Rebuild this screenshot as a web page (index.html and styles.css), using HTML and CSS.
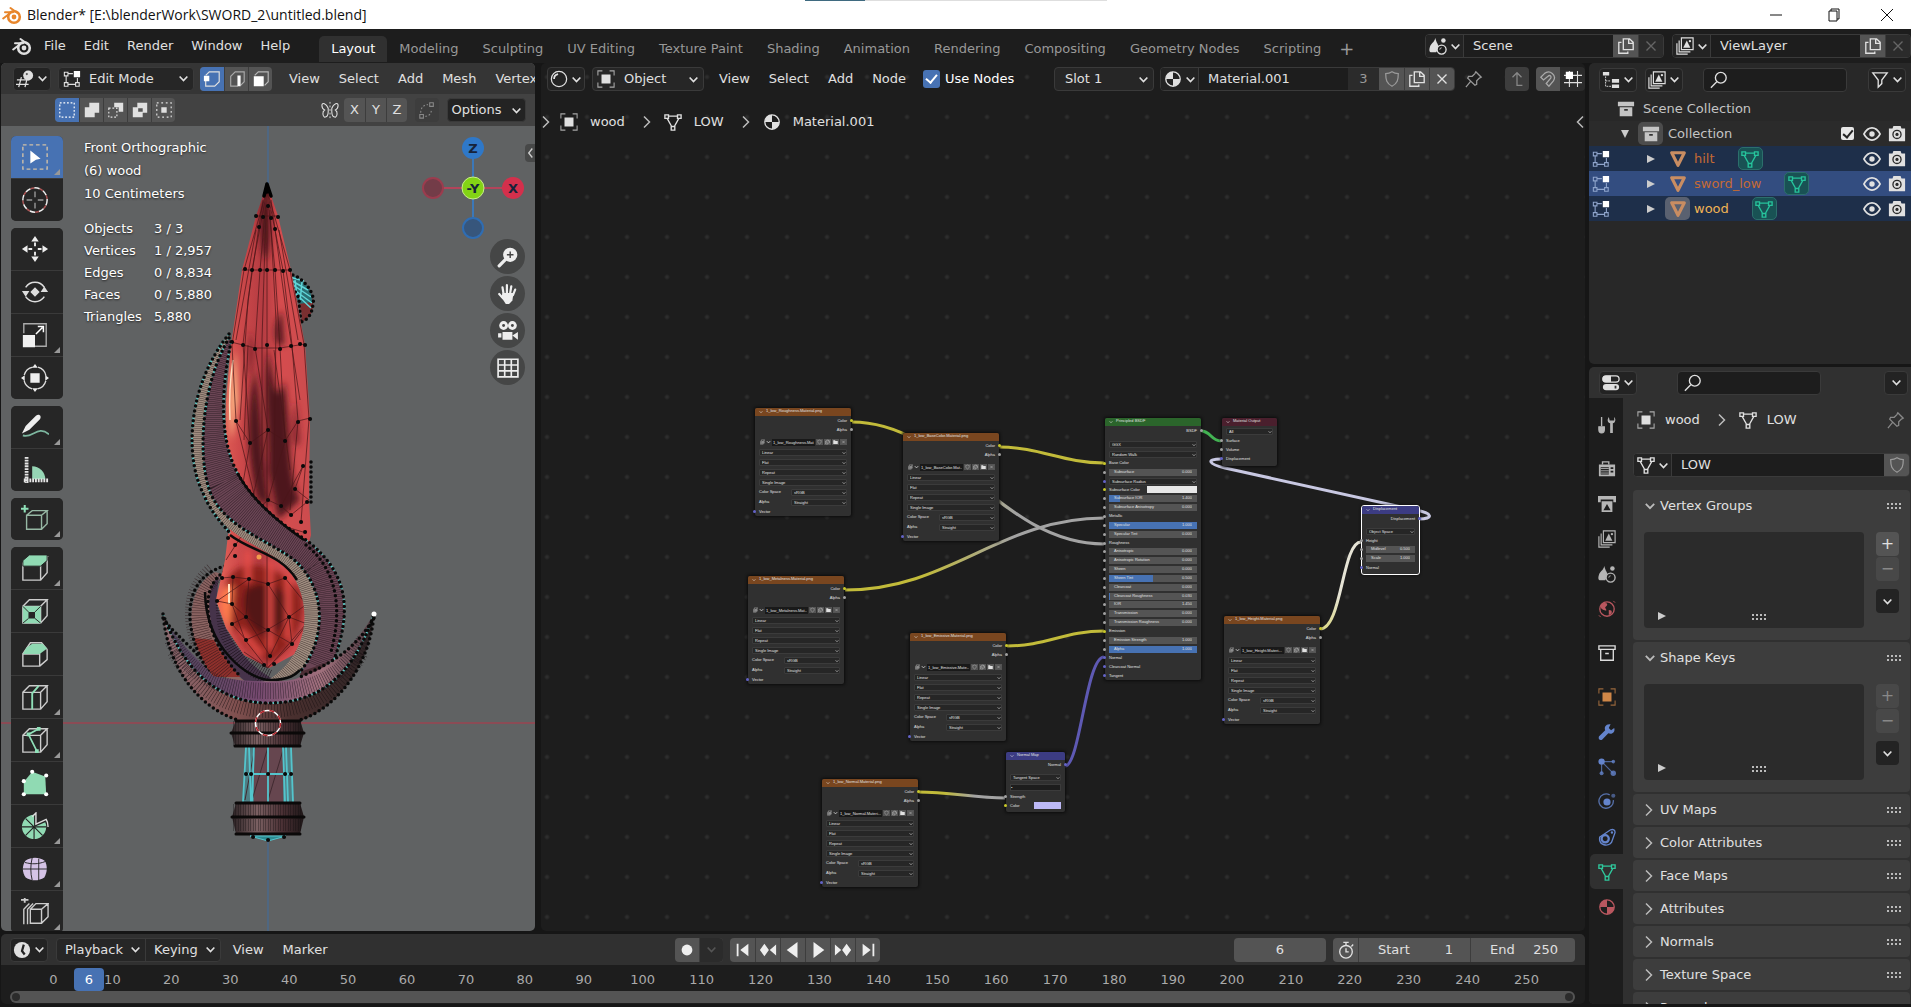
FILE: index.html
```html
<!DOCTYPE html>
<html lang="en">
<head>
    <meta charset="UTF-8">
    <meta name="viewport" content="width=device-width, initial-scale=1.0">
    <title>Blender* [E:\blenderWork\SWORD_2\untitled.blend]</title>

    <link rel="stylesheet" href="styles.css">
</head>
<body>
    <!-- icon sheet, 20x20 each -->
    <svg class="sheet" aria-hidden="true">
        <symbol id="i-chev" viewBox="0 0 10 10"><path d="M1.5 3.2 5 6.8 8.5 3.2" fill="none" stroke="currentColor" stroke-width="1.5"/></symbol>
        <symbol id="i-right" viewBox="0 0 10 20"><path d="M2 4.5 7.500 10 2 15.500" fill="none" stroke="currentColor" stroke-width="1.500"/></symbol>
        <symbol id="i-blender" viewBox="0 0 20 20"><g fill="none" stroke="currentColor" stroke-width="2" stroke-linecap="round" stroke-linejoin="round"><circle cx="12" cy="12" r="5.800" stroke-width="2.600"/><path d="M8.500 3 15.500 8M3 7.300h8M1.200 13.500 9 7.500"/></g><circle cx="12" cy="12" r="2.400" fill="currentColor"/></symbol>
        <symbol id="i-view3d" viewBox="0 0 20 20"><path d="M1 11h14M0 16h14M6 8 3 19M12 11l-2 8" stroke="currentColor" stroke-width="1.400" fill="none"/><circle cx="13.500" cy="6" r="5.500" fill="currentColor"/><circle cx="12" cy="4.500" r="1.200" fill="#555"/></symbol>
        <symbol id="i-edit" viewBox="0 0 20 20"><g fill="none" stroke="currentColor" stroke-width="1.200"><path d="M1.500 2.500h4v4h-4zM1.500 14h4v4h-4zM14 14h4v4h-4zM3.500 7v7M6 16h8M16 9v5M6 4h5"/></g><path d="M12 1h7v7h-7z" fill="#fff"/></symbol>
        <symbol id="i-vert" viewBox="0 0 20 20"><path d="M3 12v6h10l5-5V2H7L3 6" fill="none" stroke="currentColor" stroke-width="1.300"/><path d="M1 6.500h6v6H1z" fill="#fff"/></symbol>
        <symbol id="i-edge" viewBox="0 0 20 20"><path d="M11 18H3V7l5-5h10v11l-4 4" fill="none" stroke="currentColor" stroke-width="1.300" opacity=".6"/><path d="M10.500 6h3.500v12h-3.500z" fill="#fff"/></symbol>
        <symbol id="i-face" viewBox="0 0 20 20"><path d="M3 6l4-4h11v11l-4 4" fill="none" stroke="currentColor" stroke-width="1.300" opacity=".7"/><path d="M2 7h11v11H2z" fill="#fff"/></symbol>
        <symbol id="i-sel" viewBox="0 0 20 20"><path d="M2 2h16v16H2z" fill="none" stroke="#fff" stroke-width="1.300" stroke-dasharray="2 2"/></symbol>
        <symbol id="i-sel2" viewBox="0 0 20 20"><path d="M7 2h11v11h-5v5H2V7h5z" fill="currentColor"/></symbol>
        <symbol id="i-sel3" viewBox="0 0 20 20"><path d="M8 2h10v10h-5V7H8z" fill="currentColor"/><path d="M2 8h9v10H2z" fill="none" stroke="currentColor" stroke-width="1.300" stroke-dasharray="2 2"/></symbol>
        <symbol id="i-sel4" viewBox="0 0 20 20"><path fill-rule="evenodd" d="M7 2h11v11h-5v5H2V7h5zM8 8v4h5V8z" fill="currentColor"/></symbol>
        <symbol id="i-sel5" viewBox="0 0 20 20"><path d="M2 2h16v16H2z" fill="none" stroke="currentColor" stroke-width="1.300" stroke-dasharray="2 3"/><path d="M7 7h6v6H7z" fill="currentColor"/></symbol>
        <symbol id="i-fly" viewBox="0 0 20 20"><path d="M8 8C6 3 1 1 1 5c0 3 1 4 3 5-3 2-2 7 0 8 3 0 4-3 4-6zM12 8c2-5 7-7 7-3 0 3-1 4-3 5 3 2 2 7 0 8-3 0-4-3-4-6z" fill="none" stroke="currentColor" stroke-width="1.200"/><path d="M10 1v18" stroke="currentColor" stroke-dasharray="2 2"/></symbol>
        <symbol id="i-auto" viewBox="0 0 20 20"><g fill="none" stroke="currentColor" stroke-width="1.200"><path d="M13 2h4v4h-4zM2 15h4v4H2z"/><path d="M3 13C3 7 7 4 11 4M8 17c5 0 7-4 7-8" stroke-dasharray="2 2"/></g></symbol>
        <symbol id="i-obj" viewBox="0 0 20 20"><path d="M1 6V1h5M14 1h5v5M19 14v5h-5M6 19H1v-5" fill="none" stroke="currentColor" stroke-width="1.200" opacity=".7"/><path d="M5 5h10v10H5z" fill="currentColor"/></symbol>
        <symbol id="i-mesh" viewBox="0 0 20 20"><path d="M1 2h4v4H1zM15 2h4v4h-4zM8 15h4v4H8zM5 3.500h10M3.500 6l5 9M16.500 6l-5 9" fill="none" stroke="currentColor" stroke-width="1.500"/></symbol>
        <symbol id="i-mat" viewBox="0 0 20 20"><circle cx="10" cy="10" r="8" fill="none" stroke="currentColor" stroke-width="1.500"/><path d="M10 10V2a8 8 0 0 0-8 8zM10 10v8a8 8 0 0 0 8-8z" fill="currentColor"/></symbol>
        <symbol id="i-shader" viewBox="0 0 20 20"><circle cx="10" cy="10" r="8.500" fill="none" stroke="currentColor" stroke-width="1.400"/><path d="M4.500 10A5.500 5.500 0 0 1 9 4.700" fill="none" stroke="currentColor" stroke-width="2"/></symbol>
        <symbol id="i-shield" viewBox="0 0 20 20"><path d="M10 2c3 2 5 2 7 2 0 7-1 11-7 14C4 15 3 11 3 4c2 0 4 0 7-2z" fill="none" stroke="currentColor" stroke-width="1.400"/></symbol>
        <symbol id="i-copy" viewBox="0 0 20 20"><path d="M7 2h7l4 4v8H7zM13 2v5h5M5 6H2v12h10v-2" fill="none" stroke="currentColor" stroke-width="1.500"/></symbol>
        <symbol id="i-x" viewBox="0 0 20 20"><path d="M5 5l10 10M15 5 5 15" stroke="currentColor" stroke-width="1.500"/></symbol>
        <symbol id="i-pin" viewBox="0 0 20 20"><path d="M12 2l6 6-2 1-3 3v4l-2 1-8-8 1-2h4l3-3zM6 13l-5 6" fill="none" stroke="currentColor" stroke-width="1.400"/></symbol>
        <symbol id="i-up" viewBox="0 0 20 20"><path d="M16 17h-6V3M5 8l5-5 5 5" fill="none" stroke="currentColor" stroke-width="1.400"/></symbol>
        <symbol id="i-magnet" viewBox="0 0 20 20"><path d="M2 8 6 4C12-1 20 6 16 12l-5 6-3-3 5-6c1-2-1-4-3-2l-5 4z" fill="none" stroke="currentColor" stroke-width="1.400"/></symbol>
        <symbol id="i-snap" viewBox="0 0 20 20"><path d="M0 6h20M0 14h20M6 1v18M15 1v18" stroke="currentColor" stroke-width="1.200"/><path d="M2 2h8v8H2z" fill="#fff"/></symbol>
        <symbol id="i-scene" viewBox="0 0 20 20"><path d="M7 1c1 5 4 8 4 11L8 17H3c-3 0-3-3-2-6 1-4 5-5 6-10z" fill="currentColor"/><circle cx="16" cy="4" r="2.500" fill="currentColor"/><circle cx="14" cy="14" r="5" fill="#1d1d1d" stroke="currentColor" stroke-width="1.500"/><path d="M12 14a2 2 0 0 1 2-2" stroke="currentColor" fill="none"/></symbol>
        <symbol id="i-layers" viewBox="0 0 20 20"><path d="M6 1h13v13H6zM3.500 4v12.500H16M1 7v12h12" fill="none" stroke="currentColor" stroke-width="1.300"/><path d="M8 12l4-8 2 4 2 4z" fill="currentColor"/><circle cx="15.500" cy="4.500" r="1.300" fill="currentColor"/></symbol>
        <symbol id="i-tree" viewBox="0 0 20 20"><path d="M1 1h7v4H1zM11 9h8v4h-8zM11 15h8v4h-8z" fill="currentColor"/><path d="M4 6v11h6M4 11h6" fill="none" stroke="currentColor" stroke-dasharray="2 1"/></symbol>
        <symbol id="i-search" viewBox="0 0 20 20"><circle cx="12" cy="7.500" r="6" fill="none" stroke="currentColor" stroke-width="1.500"/><path d="M7.500 12 1 18.500" stroke="currentColor" stroke-width="1.500"/></symbol>
        <symbol id="i-funnel" viewBox="0 0 20 20"><path d="M2 2h16l-6 8v4l-4 4v-8z" fill="none" stroke="currentColor" stroke-width="1.500"/></symbol>
        <symbol id="i-box" viewBox="0 0 20 20"><path d="M1 2h18v5H1zM3 8h14v10H3z" fill="currentColor"/><path d="M8 10h4v2H8z" fill="#333"/></symbol>
        <symbol id="i-folder" viewBox="0 0 20 20"><path d="M1 3h7l2 3h9v12H1z" fill="currentColor"/></symbol>
        <symbol id="i-boxo" viewBox="0 0 20 20"><path d="M1 2h18v4H1zM3 6h14v12H3zM8 10.500h4" fill="none" stroke="currentColor" stroke-width="1.500"/></symbol>
        <symbol id="i-tri" viewBox="0 0 20 20"><path d="M3 3h14l-7 14z" fill="none" stroke="currentColor" stroke-width="3.500" stroke-linejoin="round"/></symbol>
        <symbol id="i-play" viewBox="0 0 10 10"><path d="M1 1l8 4-8 4z" fill="currentColor"/></symbol>
        <symbol id="i-down" viewBox="0 0 10 10"><path d="M1 1h8L5 9z" fill="currentColor"/></symbol>
        <symbol id="i-eye" viewBox="0 0 20 20"><path d="M1 10c5-9 13-9 18 0-5 9-13 9-18 0z" fill="none" stroke="currentColor" stroke-width="1.800"/><circle cx="10" cy="10" r="3" fill="currentColor"/></symbol>
        <symbol id="i-cam" viewBox="0 0 20 20"><path d="M1 4h4l1-3h8l1 3h4v14H1z" fill="currentColor"/><circle cx="10" cy="10.500" r="4.500" fill="none" stroke="#2b2b2b" stroke-width="1.500"/><circle cx="10" cy="10.500" r="1.800" fill="#2b2b2b"/></symbol>
        <symbol id="i-props" viewBox="0 0 20 20"><rect x="1" y="2" width="18" height="7" rx="3.500" fill="none" stroke="currentColor" stroke-width="1.400"/><path d="M4 2h6v7H4a3.500 3.500 0 0 1 0-7z" fill="currentColor"/><rect x="1" y="11" width="18" height="7" rx="3.500" fill="currentColor"/><path d="M14 13h2v3h-2z" fill="#333"/></symbol>
        <symbol id="i-tools" viewBox="0 0 20 20"><path d="M4 1v10M1 12h6v3c0 5-6 5-6 0z" stroke="currentColor" stroke-width="1.500" fill="currentColor"/><path d="M12 1c-3 5 0 7 1.500 7v11h3V8C18 8 21 5 18 1v4h-5z" fill="currentColor"/></symbol>
        <symbol id="i-render" viewBox="0 0 20 20"><path d="M5 5V2h7v3" stroke="currentColor" stroke-width="1.500" fill="none"/><path fill-rule="evenodd" d="M1 5h18v13H1zM3 8v8h9V8zM14 8v2h3V8zM14 12v2h3v-2z" fill="currentColor"/><path d="M3 9.500h9M3 12h9M3 14.500h9" stroke="currentColor"/></symbol>
        <symbol id="i-output" viewBox="0 0 20 20"><path d="M0 1h20v7h-3V5H3v3H0z" fill="currentColor"/><path fill-rule="evenodd" d="M4 7h12v12H4zM6 17h8l-4-7z" fill="currentColor"/></symbol>
        <symbol id="i-world" viewBox="0 0 20 20"><circle cx="10" cy="10" r="8" fill="none" stroke="currentColor" stroke-width="1.500"/><path d="M3 5c3-2 6-2 7-1 1 2-1 3-2 4 0 2 2 2 1 4-2-1-5-1-6-4zM12 11c3 0 4 1 3 4l-3 2z" fill="currentColor"/><path d="M17 1l2 2M1 17l2 2" stroke="currentColor"/></symbol>
        <symbol id="i-wrench" viewBox="0 0 20 20"><path d="M18 5.500 14.500 8 12 5.500 14 1.500c-5-1-7.500 3-6 6.500l-7 7c-1 3 1 4.500 3.500 3.500l7-7c4.500 1.500 8-1.500 6.500-6z" fill="currentColor"/></symbol>
        <symbol id="i-part" viewBox="0 0 20 20"><circle cx="4" cy="4" r="3.500" fill="currentColor"/><path d="M5 4h12M4 7v10M6 6l11 11" stroke="currentColor" stroke-width="1.300" opacity=".7"/><g fill="currentColor" opacity=".8"><circle cx="17" cy="4" r="2"/><circle cx="4" cy="17" r="2.200"/><circle cx="17" cy="17" r="3"/></g></symbol>
        <symbol id="i-phys" viewBox="0 0 20 20"><path d="M13 2A8 8 0 1 0 17 8" fill="none" stroke="currentColor" stroke-width="1.500" opacity=".8"/><circle cx="10" cy="10" r="4" fill="currentColor"/><circle cx="17" cy="3" r="2.300" fill="currentColor" opacity=".6"/></symbol>
        <symbol id="i-cons" viewBox="0 0 20 20"><path d="M2 10 14 2c3-1 5 0 5 3l-4 11c-3 5-15 4-13-6z" fill="none" stroke="currentColor" stroke-width="1.500"/><circle cx="8" cy="12" r="4" fill="none" stroke="currentColor" stroke-width="2.500"/><circle cx="15.500" cy="5" r="1.300" fill="currentColor"/></symbol>
        <symbol id="i-clock" viewBox="0 0 20 20"><circle cx="10" cy="10" r="9" fill="currentColor"/><path d="M12 4l-2 7 3 4" stroke="#222" stroke-width="2.500" fill="none"/></symbol>
        <symbol id="i-stop" viewBox="0 0 20 20"><circle cx="10" cy="12" r="7" fill="none" stroke="currentColor" stroke-width="1.500"/><path d="M10 8v4h3M7 1.500h6M10 2v3M16 6l2-2" stroke="currentColor" stroke-width="1.500" fill="none"/></symbol>
        <symbol id="t-box" viewBox="0 0 30 30"><path d="M2 2h26v26H2z" fill="none" stroke="#d0c0a8" stroke-width="1.500" stroke-dasharray="4 3"/><path d="M10 8l11 9-5 1-6 4z" fill="#fff"/></symbol>
        <symbol id="t-cursor" viewBox="0 0 30 30"><circle cx="15" cy="15" r="13" fill="none" stroke="#eee" stroke-width="1.600" stroke-dasharray="6 4"/><circle cx="15" cy="15" r="13" fill="none" stroke="#a55" stroke-width="1.600" stroke-dasharray="4 6" stroke-dashoffset="-6"/><path d="M15 6v6M15 18v6M6 15h6M18 15h6" stroke="#999" stroke-width="1.500"/></symbol>
        <symbol id="t-move" viewBox="0 0 30 30"><path d="M15 1l4 6h-8zM15 29l4-6h-8zM1 15l6-4v8zM29 15l-6-4v8z" fill="#eee"/><path d="M15 8v4M15 18v4M8 15h4M18 15h4" stroke="#eee" stroke-width="2"/></symbol>
        <symbol id="t-rot" viewBox="0 0 30 30"><path d="M5 10a12 12 0 0 1 20 0M25 20a12 12 0 0 1-20 0" fill="none" stroke="#ddd" stroke-width="1.600"/><path d="M1 14h8l-4 6zM21 15h8l-4-6zM15 10l5 5-5 5-5-5z" fill="#ddd"/></symbol>
        <symbol id="t-scale" viewBox="0 0 30 30"><path d="M3 13V3h24v24H15" fill="none" stroke="#aaa" stroke-width="1.500"/><path d="M2 15h13v13H2z" fill="#f0f0f0"/><path d="M16 14l7-7M18 6h6v6" stroke="#fff" stroke-width="1.600" fill="none"/></symbol>
        <symbol id="t-trans" viewBox="0 0 30 30"><circle cx="15" cy="15" r="12" fill="none" stroke="#ddd" stroke-width="1.400" stroke-dasharray="13 5.850" stroke-dashoffset="-3"/><path d="M10 10h10v10H10zM15 0l3 4h-6zM15 30l3-4h-6zM0 15l4-3v6zM30 15l-4-3v6z" fill="#eee"/></symbol>
        <symbol id="t-pen" viewBox="0 0 30 30"><path d="M2 24c10 4 16-12 28-1" fill="none" stroke="#7db7a0" stroke-width="1.800"/><path d="M1 22l4-8L16 3c3-3 7 0 4 4L9 18z" fill="#eee"/></symbol>
        <symbol id="t-ruler" viewBox="0 0 30 30"><path d="M12 11a14 14 0 0 1 14 14H12z" fill="#96d6b5"/><path d="M6 1v28M3 26h26" stroke="#e5e5e5" stroke-width="4" stroke-dasharray="2 1"/></symbol>
        <symbol id="cube" viewBox="0 0 30 30"><path d="M2 10h19v18H2zM2 10l7-7h19l-7 7M28 3v17l-7 8" fill="none" stroke="currentColor" stroke-width="1.500"/></symbol>
        <symbol id="t-add" viewBox="0 0 30 30"><path d="M6 11h16v15H6zM6 11l6-5h16l-6 5M28 6v14l-6 6" fill="none" stroke="#96b8a4" stroke-width="1.500"/><path d="M4 0v8M0 4h8" stroke="#8fe0b8" stroke-width="2.200"/></symbol>
        <symbol id="t-extrude" viewBox="0 0 30 30"><use href="#cube"/><path d="M2 13V7l7-6h19v6l-7 6z" fill="#90dab3" stroke="#222"/></symbol>
        <symbol id="t-inset" viewBox="0 0 30 30"><use href="#cube"/><path fill-rule="evenodd" d="M2 10h19v18H2zM8 16v7h7v-7z" fill="#90dab3"/><path d="M2 10l6 6M21 10l-6 6M2 28l6-5M21 28l-6-5" stroke="#222"/></symbol>
        <symbol id="t-bevel" viewBox="0 0 30 30"><path d="M2 15h18v13H2zM28 10v11l-8 7M2 15l8-12h12l6 7" fill="none" stroke="#ccc" stroke-width="1.500"/><path d="M2 15l4-7 6-4h11l5 5-8 6z" fill="#90dab3"/></symbol>
        <symbol id="t-loop" viewBox="0 0 30 30"><use href="#cube"/><path d="M12 28V11l7-8" fill="none" stroke="#8fe0b8" stroke-width="2"/></symbol>
        <symbol id="t-knife" viewBox="0 0 30 30"><use href="#cube"/><path d="M19 3 8 9l9 18" fill="none" stroke="#8fe0b8" stroke-width="1.800"/><path d="M17 1h4v4h-4zM6 7h4v4H6zM15 25h4v4h-4z" fill="#8fe0b8"/></symbol>
        <symbol id="t-poly" viewBox="0 0 30 30"><path d="M12 3l14 5 1 19H3V14z" fill="#90dab3"/><g fill="#fff"><circle cx="12" cy="3" r="2.200"/><circle cx="27" cy="7" r="2.200"/><circle cx="3" cy="13" r="2.200"/><circle cx="3" cy="27" r="2.200"/><circle cx="27" cy="27" r="2.200"/></g></symbol>
        <symbol id="t-spin" viewBox="0 0 30 30"><path d="M14 3a13 13 0 1 0 12 8l-12 5z" fill="#90dab3"/><path d="M14 16v13M14 16H1M14 16l-9-9M14 16l-9 9M14 16l9 9M14 16h13" stroke="#222" stroke-width="1.200"/><path d="M12 5l4-4v12l11-5c2 3 2 6 2 8" fill="none" stroke="#ddd" stroke-width="1.500"/></symbol>
        <symbol id="t-smooth" viewBox="0 0 30 30"><path d="M5 6c6-4 14-4 20 0 4 5 3 13 0 18-6 4-14 4-20 0-4-5-4-13 0-18z" fill="#d5c3e6"/><path d="M12 3c-2 8-2 16 0 24M2 15h26M4 8c8 2 14 2 22-1M19 4v23" stroke="#222" fill="none"/></symbol>
        <symbol id="t-slide" viewBox="0 0 30 30"><path d="M10 12h12v15H10zM10 12l6-6h13l-7 6M29 6v14l-7 7M7 28V12l6-6M3 28V12l6-6" fill="none" stroke="#ccc" stroke-width="1.500"/><path d="M0 2h8M4 0v5" stroke="#ccc" stroke-width="2"/></symbol>
    </svg>

    <header class="titlebar">
        <svg class="logo" viewBox="0 0 20 20"><use href="#i-blender"/></svg>
        <span class="caption">Blender* [E:\blenderWork\SWORD_2\untitled.blend]</span>
        <div class="win-buttons">
            <button aria-label="Minimize"><svg viewBox="0 0 20 20"><path d="M4 10h12" stroke="#111"/></svg></button>
            <button aria-label="Restore"><svg viewBox="0 0 20 20"><path d="M5 6h8v10H5zM7 6V4h8v10h-2" fill="none" stroke="#111"/></svg></button>
            <button aria-label="Close"><svg viewBox="0 0 20 20"><path d="M4 4l12 12M16 4 4 16" stroke="#111"/></svg></button>
        </div>
    </header>

    <nav class="topbar">
        <svg class="ico mark"><use href="#i-blender"/></svg>
        <div class="menus">
            <button>File</button><button>Edit</button><button>Render</button><button>Window</button><button>Help</button>
        </div>
        <div class="tabs">
            <button class="active">Layout</button><button>Modeling</button><button>Sculpting</button><button>UV Editing</button><button>Texture Paint</button><button>Shading</button><button>Animation</button><button>Rendering</button><button>Compositing</button><button>Geometry Nodes</button><button>Scripting</button><button class="plus" aria-label="Add workspace">+</button>
        </div>
        <div class="idblock">
            <button class="type" aria-label="Browse scene"><svg class="ico"><use href="#i-scene"/></svg><svg class="chev"><use href="#i-chev"/></svg></button>
            <input type="text" aria-label="Scene name" value="Scene">
            <button class="sq" aria-label="New scene"><svg class="ico"><use href="#i-copy"/></svg></button>
            <button class="sq off" aria-label="Remove scene"><svg class="ico"><use href="#i-x"/></svg></button>
        </div>
        <div class="idblock">
            <button class="type" aria-label="Browse view layer"><svg class="ico"><use href="#i-layers"/></svg><svg class="chev"><use href="#i-chev"/></svg></button>
            <input type="text" aria-label="View layer name" value="ViewLayer">
            <button class="sq" aria-label="New view layer"><svg class="ico"><use href="#i-copy"/></svg></button>
            <button class="sq off" aria-label="Remove view layer"><svg class="ico"><use href="#i-x"/></svg></button>
        </div>
    </nav>

    <main>
        <div class="workspace">
            <div class="editors">
                <section class="view3d">
                    <svg class="scene" viewBox="1 63 534 868" preserveAspectRatio="xMidYMid slice">
                        <defs>
                            <linearGradient id="blade" x1="0" x2="1">
                                <stop offset="0" stop-color="#c94a42"/><stop offset=".12" stop-color="#e8665a"/><stop offset=".3" stop-color="#cf4a4b"/><stop offset=".48" stop-color="#b53c42"/><stop offset=".62" stop-color="#d54c4e"/><stop offset=".85" stop-color="#cc4c4e"/><stop offset="1" stop-color="#a33a40"/>
                            </linearGradient>
                            <linearGradient id="guard" x1="0" x2="1">
                                <stop offset="0" stop-color="#8d6a70"/><stop offset=".35" stop-color="#80504f"/><stop offset=".6" stop-color="#4a302f"/><stop offset="1" stop-color="#2c2324"/>
                            </linearGradient>
                            <linearGradient id="guardtop" x1="0" x2="1">
                                <stop offset="0" stop-color="#4b4358"/><stop offset=".45" stop-color="#75496f"/><stop offset=".75" stop-color="#a0707c"/><stop offset="1" stop-color="#4d3a40"/>
                            </linearGradient>
                            <linearGradient id="ring" x1="0" x2="1">
                                <stop offset="0" stop-color="#2b2224"/><stop offset=".35" stop-color="#7b6062"/><stop offset=".7" stop-color="#4a3034"/><stop offset="1" stop-color="#1e1718"/>
                            </linearGradient>
                            <filter id="soft"><feGaussianBlur stdDeviation="3"/></filter>
                            <clipPath id="in-blade"><path d="M267 184 L256 216 L242 270 L231 345 L226 400 L225 455 L240 500 L228 535 L225 560 L216 600 L226 628 L244 655 L269 668 L297 653 L308 630 L311 602 L304 560 L311 535 L309 500 L310 419 L305 345 L291 270 L278 216Z"/></clipPath>
                            <clipPath id="in-dark"><path d="M229 338C201 385 198 455 209 489C221 525 262 537 293 559C328 588 326 640 300 672L334 660C350 615 352 575 306 540C278 522 252 500 238 474C219 440 221 390 231 342Z"/></clipPath>
                            <clipPath id="in-light"><path d="M229 334C188 385 184 455 203 493C222 538 262 545 282 563C308 585 320 645 270 679L262 682C285 684 300 674 307 662C326 630 324 585 293 559C262 537 221 525 209 489C198 455 201 385 229 338Z"/></clipPath>
                        </defs>
                        <path d="M268 126V190M268 838V931" stroke="#4a6a8c" stroke-width="1.500"/>
                        <path d="M1 723H535" stroke="#9a4550" stroke-width="1.500"/>

                        <!-- tail of the vine behind the blade -->
                        <path d="M285 275C298 272 315 290 313 304C313 314 308 320 301 322C303 312 300 304 294 297Z" fill="#7a2f30"/>
                        <path d="M285 275C298 272 315 290 312 302L299 304Z" fill="#2a6e73"/>
                        <path d="M286 276 304 281M287 278 308 290M290 283 311 297M293 289 312 303M296 294 311 308M295 280 297 296M302 282 300 302" stroke="#5fd5d8" stroke-width="1.500"/>
                        <path d="M285 275C292 290 301 296 299 304L301 322M288 274C300 274 316 292 313 304C312 314 308 320 301 322" fill="none" class="dots"/>

                        <!-- loop behind the pommel -->
                        <path d="M215 572C184 588 184 640 212 675L246 682C212 660 200 610 222 574Z" fill="#8a6361"/>
                        <path d="M194 638C200 655 206 668 214 677H245C232 665 222 655 214 640Z" fill="#8e302c"/>
                        <path d="M219 576C200 592 208 650 246 682L275 680C250 668 226 640 216 602Z" fill="#46334a"/>
                        <path d="M214 573C187 595 190 640 225 678" fill="none" stroke="#2a1719" stroke-width="22" stroke-dasharray=".5 2" opacity=".8"/>
                        <path d="M224 600C222 640 240 665 270 678" fill="none" stroke="#1a1018" stroke-width="16" stroke-dasharray=".5 2"/>
                        <path d="M225 566C180 578 182 632 210 674M224 572C196 590 206 640 240 676" fill="none" class="dots"/>
                        <path d="M318 570C352 600 342 650 320 672L300 676Z" fill="#4c2e35"/>

                        <!-- blade -->
                        <g clip-path="url(#in-blade)">
                            <path d="M200 180H330V670H200Z" fill="url(#blade)"/>
                            <g filter="url(#soft)">
                                <path d="M262 200C258 230 262 260 266 260C272 240 270 220 268 200ZM282 310C270 330 276 350 284 345ZM255 370C248 400 244 450 258 500L270 505C262 470 264 430 255 370ZM268 350C262 400 270 430 268 470L278 520L300 500C286 470 292 430 284 380C276 410 274 380 268 350Z" fill="#4e161b"/>
                                <path d="M250 330C246 370 250 400 254 350ZM296 400C290 430 294 460 300 440Z" fill="#7d2429"/>
                                <path d="M236 350C230 380 228 420 232 440L238 400Z" fill="#ffbb86"/>
                                <path d="M226 585C232 560 268 555 300 590C310 620 290 655 268 662C240 650 222 620 226 585Z" fill="#8e201f"/>
                                <path d="M246 590C256 580 280 580 288 600C290 625 275 640 262 636C246 625 240 605 246 590Z" fill="#521315"/>
                                <path d="M222 590C218 605 222 620 230 628L234 585Z" fill="#ff7d4d"/>
                                <path d="M270 560V650M288 575V640M248 550V582M240 630 262 655" stroke="#ee5048" stroke-width="5"/>
                            </g>
                            <path d="M233 360C230 380 229 400 230 420" stroke="#ffe0c0" fill="none" stroke-width="1.500"/>
                            <path d="M229 584V604" stroke="#ffe0c0" stroke-width="2"/>
                        </g>
                        <g class="wire">
                            <path d="M267 190 244 270 232 345 236 421 258 510 226 560M267 190 252 270 243 344 250 443 240 500M267 190 260 270 255 347 268 430 250 510M267 190V668M267 190 275 270 280 348 285 441 268 500M267 190 283 270 292 345 298 421 290 510M267 190 290 270 304 344 309 419 301 522M256 216H278M242 270H291M231 342 255 348 280 348 305 344M236 421 250 443 268 430 285 441 298 421 310 418M268 500 281 506 291 515 307 502M281 506 303 466 295 489 309 500M268 500 250 516 303 532"/>
                            <path d="M217 601 232 604 246 617 267 630 289 617 307 604M222 578 233 577 249 579 268 584 285 578 306 604M217 601 249 579 246 617 232 624 246 640 268 630 292 644 307 624 289 617 268 584M233 577 232 604 245 640 267 668 292 644 289 617M246 617 270 656 289 617M306 624 268 668 244 652"/>
                        </g>
                        <path class="wire" d="M263 200 248 300 240 420M271 200 286 310 300 400M266 210 262 340 262 470M270 210 276 320 274 480M256 230 236 340M279 230 298 340M248 345 244 440M274 350 290 470"/>
                        <path d="M267 184 264 196M267 184 271 196M267 184V192" stroke="#000" stroke-width="3.500" stroke-linecap="round"/>
                        <g fill="none" class="joints">
                            <path d="M256 216h.1M263 217h.1M271 218h.1M278 217h.1M268 206h.1M259 227h.1M275 229h.1"/>
                            <path d="M245 269h.1M252 270h.1M260 270h.1M267 270h.1M275 270h.1M283 271h.1M290 270h.1"/>
                            <path d="M232 342h.1M243 345h.1M255 349h.1M267 345h.1M280 349h.1M291 346h.1M300 344h.1M305 345h.1M236 421h.1M250 443h.1M268 430h.1M285 441h.1M298 422h.1M310 419h.1M303 466h.1M295 489h.1M307 502h.1M268 500h.1M281 506h.1M291 515h.1M301 522h.1M305 532h.1"/>
                            <path d="M228 538h.1M235 545h.1M235 556h.1M222 578h.1M233 577h.1M249 579h.1M268 584h.1M285 578h.1M217 601h.1M232 604h.1M246 617h.1M289 617h.1M307 604h.1M232 624h.1M268 630h.1M306 624h.1M246 640h.1M292 644h.1M297 653h.1M270 656h.1M274 664h.1M264 665h.1"/>
                        </g>

                        <!-- vine, wide purple side then light side -->
                        <g clip-path="url(#in-dark)">
                            <path d="M180 320H360V690H180Z" fill="#6b4555"/>
                            <path d="M230 340C208 385 206 440 224 482C246 522 292 535 318 562C338 595 330 635 317 666" fill="none" stroke="#20151a" stroke-width="44" stroke-dasharray=".5 1.500" opacity=".75"/>
                        </g>
                        <g clip-path="url(#in-light)">
                            <path d="M180 320H360V690H180Z" fill="#a08d80"/>
                            <path d="M228 336C194 385 190 455 206 491C222 532 262 541 288 561C318 588 320 645 275 681" fill="none" stroke="#2b2220" stroke-width="28" stroke-dasharray=".5 1.500" opacity=".75"/>
                        </g>
                        <g fill="none" class="teal">
                            <path d="M229 334C188 385 184 455 203 493C210 510 220 522 230 533"/>
                            <path d="M229 338C201 385 198 455 209 489C221 525 262 537 293 559C328 588 326 640 300 672"/>
                            <path d="M231 342C221 390 219 440 238 474"/>
                            <path d="M306 540C352 575 350 615 334 660"/>
                        </g>
                        <path d="M238 474C252 500 278 522 304 540M230 535C252 552 280 553 297 580M205 592C206 650 250 680 270 680C290 680 296 674 300 670" fill="none" stroke="#0b0b0b" stroke-width="2.500"/>
                        <g fill="none" class="dots">
                            <path d="M229 334C188 385 184 455 203 493C210 510 220 522 230 533"/>
                            <path d="M229 338C201 385 198 455 209 489C221 525 262 537 293 559C328 588 326 640 300 672"/>
                            <path d="M231 342C221 390 219 440 238 474C252 500 278 522 306 540C352 575 350 615 334 660"/>
                            <path d="M306 545C340 572 342 615 330 655"/>
                            <path d="M311 462V505"/>
                        </g>

                        <!-- guard -->
                        <path d="M163 614C175 640 190 650 213 676C240 682 290 684 300 677C330 668 352 650 374 614C352 680 315 703 269 703C222 703 185 675 163 614Z" fill="url(#guardtop)"/>
                        <path d="M163 614C185 675 222 703 269 703C315 703 352 680 374 614C370 665 337 708 300 721H238C200 708 168 670 163 614Z" fill="url(#guard)"/>
                        <path d="M172 640C190 676 222 691 269 691C315 691 344 676 364 640" fill="none" stroke="#201820" stroke-width="16" stroke-dasharray=".5 2" opacity=".8"/>
                        <path d="M174 652C195 690 230 711 269 711C308 711 342 690 362 652" fill="none" stroke="#1a1213" stroke-width="14" stroke-dasharray=".5 2.500" opacity=".8"/>
                        <path d="M163 614C185 675 222 703 269 703C315 703 352 680 374 614" fill="none" class="teal"/>
                        <path d="M163 614C185 675 222 703 269 703C315 703 352 680 374 614M163 614C168 670 200 708 238 720M374 614C370 665 337 708 300 720M163 618C175 635 190 645 200 658M374 618C355 650 330 664 300 677" fill="none" class="dots"/>
                        <circle cx="374" cy="614" r="2.500" fill="#fff"/>

                        <!-- grip -->
                        <path d="M246 747H291L293 802H243Z" fill="#66464f"/>
                        <path d="M246 747h8v55h-11zM283 747h8l2 55h-10z" fill="#4f7e84"/>
                        <path d="M252 800 268 747M268 800 284 747M245 800l10-53" stroke="#402a30" fill="none"/>
                        <path d="M246 747 243 802M254 747 252 802M268 747V802M283 747 285 802M291 747 293 802M244 774H293M249 747l2 55M286 747l2 55" fill="none" stroke="#54c5cd" stroke-width="1.800"/>
                        <path d="M236 720H300L304 733L300 746H235L231 733Z" fill="url(#ring)"/>
                        <path d="M236 803H300L304 817L300 834H236L232 817Z" fill="url(#ring)"/>
                        <path d="M233 740H303M233 727H303M233 810H303M233 825H303" stroke="#130e10" stroke-width="12" stroke-dasharray=".5 2" opacity=".7"/>
                        <path d="M236 721H300M231 733H304M235 746H300M236 803H300M232 817H304M236 834H300" stroke="#0b0909" stroke-width="3" stroke-linecap="round"/>
                        <path d="M250 836 268 841 286 836Z" fill="#2d8c92" stroke="#54c5cd"/>
                        <path d="M246 774h.1M251 774h.1M268 774h.1M285 774h.1M291 774h.1M253 837h.1M268 840h.1M284 837h.1" class="joints"/>
                        <circle cx="259" cy="557" r="2.500" fill="#f29b4c"/>
                        <!-- 3d cursor -->
                        <circle cx="268" cy="723" r="12.500" fill="none" stroke="#fff" stroke-width="1.500"/>
                        <circle cx="268" cy="723" r="12.500" fill="none" stroke="#b3252c" stroke-width="1.500" stroke-dasharray="5 5"/>
                    </svg>

                    <div class="header">
                        <button class="type" aria-label="Editor type"><svg class="ico"><use href="#i-view3d"/></svg><svg class="chev"><use href="#i-chev"/></svg></button>
                        <label class="pick mode"><svg class="ico"><use href="#i-edit"/></svg><select aria-label="Mode"><option>Edit Mode</option></select><svg class="chev"><use href="#i-chev"/></svg></label>
                        <div class="seg">
                            <button class="on" aria-label="Vertex select"><svg class="ico"><use href="#i-vert"/></svg></button>
                            <button aria-label="Edge select"><svg class="ico"><use href="#i-edge"/></svg></button>
                            <button aria-label="Face select"><svg class="ico"><use href="#i-face"/></svg></button>
                        </div>
                        <div class="menus"><button>View</button><button>Select</button><button>Add</button><button>Mesh</button><button>Vertex</button></div>
                    </div>
                    <div class="header tool-settings">
                        <div class="seg">
                            <button class="on" aria-label="New selection"><svg class="ico"><use href="#i-sel"/></svg></button>
                            <button aria-label="Extend"><svg class="ico"><use href="#i-sel2"/></svg></button>
                            <button aria-label="Subtract"><svg class="ico"><use href="#i-sel3"/></svg></button>
                            <button aria-label="Invert"><svg class="ico"><use href="#i-sel4"/></svg></button>
                            <button aria-label="Intersect"><svg class="ico"><use href="#i-sel5"/></svg></button>
                        </div>
                        <svg class="ico fly"><use href="#i-fly"/></svg>
                        <div class="seg axes"><button>X</button><button>Y</button><button>Z</button></div>
                        <div class="seg dim"><button aria-label="Auto merge"><svg class="ico"><use href="#i-auto"/></svg></button></div>
                        <button class="type options">Options<svg class="chev"><use href="#i-chev"/></svg></button>
                    </div>

                    <div class="viewport">
                        <div class="toolbar">
                            <div class="group">
                                <button class="on more" aria-label="Select box"><svg><use href="#t-box"/></svg></button>
                                <button aria-label="Cursor"><svg><use href="#t-cursor"/></svg></button>
                            </div>
                            <div class="group">
                                <button aria-label="Move"><svg><use href="#t-move"/></svg></button>
                                <button aria-label="Rotate"><svg><use href="#t-rot"/></svg></button>
                                <button class="more" aria-label="Scale"><svg><use href="#t-scale"/></svg></button>
                                <button aria-label="Transform"><svg><use href="#t-trans"/></svg></button>
                            </div>
                            <div class="group">
                                <button class="more" aria-label="Annotate"><svg><use href="#t-pen"/></svg></button>
                                <button aria-label="Measure"><svg><use href="#t-ruler"/></svg></button>
                            </div>
                            <div class="group">
                                <button class="more" aria-label="Add cube"><svg><use href="#t-add"/></svg></button>
                            </div>
                            <div class="group">
                                <button class="more" aria-label="Extrude"><svg><use href="#t-extrude"/></svg></button>
                                <button aria-label="Inset faces"><svg><use href="#t-inset"/></svg></button>
                                <button aria-label="Bevel"><svg><use href="#t-bevel"/></svg></button>
                                <button class="more" aria-label="Loop cut"><svg><use href="#t-loop"/></svg></button>
                                <button class="more" aria-label="Knife"><svg><use href="#t-knife"/></svg></button>
                                <button aria-label="Poly build"><svg><use href="#t-poly"/></svg></button>
                                <button class="more" aria-label="Spin"><svg><use href="#t-spin"/></svg></button>
                                <button class="more" aria-label="Smooth"><svg><use href="#t-smooth"/></svg></button>
                                <button class="more" aria-label="Edge slide"><svg><use href="#t-slide"/></svg></button>
                            </div>
                        </div>
                        <div class="overlay">
                            <p>Front Orthographic</p>
                            <p>(6) wood</p>
                            <p>10 Centimeters</p>
                            <dl>
                                <dt>Objects</dt><dd>3 / 3</dd>
                                <dt>Vertices</dt><dd>1 / 2,957</dd>
                                <dt>Edges</dt><dd>0 / 8,834</dd>
                                <dt>Faces</dt><dd>0 / 5,880</dd>
                                <dt>Triangles</dt><dd>5,880</dd>
                            </dl>
                        </div>
                        <div class="navigate">
                            <svg class="gizmo" viewBox="0 0 104 104">
                                <path d="M52 12v80" stroke="#3c78b8" stroke-width="2"/><path d="M12 52h80" stroke="#b2445a" stroke-width="2"/>
                                <circle cx="52" cy="12" r="11" fill="#2f78c8"/><circle cx="52" cy="92" r="10" fill="#37567c" stroke="#2f6db3" stroke-width="2"/>
                                <circle cx="12" cy="52" r="10" fill="#733c48" stroke="#9b3c4e" stroke-width="2"/><circle cx="92" cy="52" r="11" fill="#d4304c"/>
                                <circle cx="52" cy="52" r="11" fill="#83d315" stroke="#c8ee8a"/>
                                <text x="52" y="17">Z</text><text x="92" y="57">X</text><text x="52" y="57">-Y</text>
                            </svg>
                            <button class="round" aria-label="Zoom"><svg viewBox="0 0 20 20"><circle cx="12" cy="8" r="6.500" fill="#eee"/><path d="M8 12l-6 6" stroke="#eee" stroke-width="3" stroke-linecap="round"/><path d="M12 5v6M9 8h6" stroke="#444" stroke-width="1.300"/></svg></button>
                            <button class="round" aria-label="Pan"><svg viewBox="0 0 20 20"><path d="M6 10 5 4M9 9V2M12 9l1-6M14.500 11l2-5M5.500 14 2 10" stroke="#eee" stroke-width="2" stroke-linecap="round"/><path d="M5 9h10l-1 7-3 3H8l-4-6z" fill="#eee"/></svg></button>
                            <button class="round" aria-label="Camera"><svg viewBox="0 0 20 20"><circle cx="6" cy="5" r="4" fill="#eee"/><circle cx="14" cy="5" r="4" fill="#eee"/><circle cx="6" cy="5" r="1.300" fill="#444"/><circle cx="14" cy="5" r="1.300" fill="#444"/><path d="M5 11h9v7H5zM14 14l5-3v7zM1 12h3v4H1z" fill="#eee"/></svg></button>
                            <button class="round" aria-label="Orthographic"><svg viewBox="0 0 20 20"><path d="M1 2h18v16H1zM1 7.300h18M1 12.600h18M7 2v16M13 2v16" fill="none" stroke="#eee" stroke-width="1.500"/></svg></button>
                        </div>
                        <button class="sidebar-tab" aria-label="Show sidebar"><svg viewBox="0 0 10 20"><path d="M7 5 3 10l4 5" fill="none" stroke="#ccc" stroke-width="1.500"/></svg></button>
                    </div>
                </section>

                <section class="nodes">
                    <div class="canvas">
                        <svg class="links">
                            <defs>
                                <linearGradient id="fade" x1="0" x2="1"><stop offset=".3" stop-color="#c2bb3a"/><stop offset=".65" stop-color="#a3a3a3"/></linearGradient>
                                <linearGradient id="fade2" x1="0" x2="0" y1="1" y2="0"><stop offset="0" stop-color="#dcd98c"/><stop offset=".4" stop-color="#e6e4d6"/></linearGradient>
                            </defs>
                            <g transform="translate(-541 -63)">
                                <path d="M852 422C950 422 1000 544 1104 544" stroke="url(#fade)"/>
                                <path d="M999 447C1040 447 1063 463 1104 463" stroke="#c2bb3a"/>
                                <path d="M845 590C950 590 1000 518 1104 518" stroke="url(#fade)"/>
                                <path d="M1007 646C1045 646 1066 631 1104 631" stroke="#c2bb3a"/>
                                <path d="M918 792C950 792 975 798 1005 798" stroke="url(#fade)"/>
                                <path d="M1065 766C1080 766 1086 657 1104 657" stroke="#5e59b3"/>
                                <path d="M1201 431C1211 431 1211 441 1221 441" stroke="#43b353"/>
                                <path d="M1320 629C1342 629 1342 542 1361 542" stroke="url(#fade2)"/>
                                <path d="M1419 519C1434 519 1433 513 1415 510L1225 468C1208 464 1206 459 1221 459" stroke="#c8c8e2"/>
                            </g>
                        </svg>
                        <div id="node-list"></div>
                    </div>
                    <div class="header">
                        <button class="type" aria-label="Editor type"><svg class="ico"><use href="#i-shader"/></svg><svg class="chev"><use href="#i-chev"/></svg></button>
                        <label class="pick kind"><svg class="ico"><use href="#i-obj"/></svg><select aria-label="Shader type"><option>Object</option></select><svg class="chev"><use href="#i-chev"/></svg></label>
                        <div class="menus"><button>View</button><button>Select</button><button>Add</button><button>Node</button></div>
                        <label class="check"><input type="checkbox" checked>Use Nodes</label>
                        <label class="pick slot"><select aria-label="Slot"><option>Slot 1</option></select><svg class="chev"><use href="#i-chev"/></svg></label>
                        <div class="idblock material">
                            <button class="type" aria-label="Browse material"><svg class="ico"><use href="#i-mat"/></svg><svg class="chev"><use href="#i-chev"/></svg></button>
                            <input type="text" aria-label="Material name" value="Material.001">
                            <button class="users">3</button>
                            <button class="sq" aria-label="Fake user"><svg class="ico"><use href="#i-shield"/></svg></button>
                            <button class="sq" aria-label="New material"><svg class="ico"><use href="#i-copy"/></svg></button>
                            <button class="sq" aria-label="Unlink"><svg class="ico"><use href="#i-x"/></svg></button>
                        </div>
                        <svg class="ico pin"><use href="#i-pin"/></svg>
                        <div class="seg dim"><button aria-label="Parent tree"><svg class="ico"><use href="#i-up"/></svg></button></div>
                        <div class="seg snap"><button aria-label="Snap"><svg class="ico"><use href="#i-magnet"/></svg></button><svg class="ico"><use href="#i-snap"/></svg></div>
                    </div>
                    <div class="crumbs">
                        <svg class="arrow"><use href="#i-right"/></svg>
                        <svg class="ico"><use href="#i-obj"/></svg><span>wood</span>
                        <svg class="arrow"><use href="#i-right"/></svg>
                        <svg class="ico"><use href="#i-mesh"/></svg><span>LOW</span>
                        <svg class="arrow"><use href="#i-right"/></svg>
                        <svg class="ico"><use href="#i-mat"/></svg><span>Material.001</span>
                        <svg class="arrow back"><use href="#i-right"/></svg>
                    </div>
                </section>
            </div>

            <section class="timeline">
                <div class="header">
                    <button class="type" aria-label="Editor type"><svg class="ico"><use href="#i-clock"/></svg><svg class="chev"><use href="#i-chev"/></svg></button>
                    <div class="pair">
                        <button>Playback<svg class="chev"><use href="#i-chev"/></svg></button>
                        <button>Keying<svg class="chev"><use href="#i-chev"/></svg></button>
                    </div>
                    <div class="menus"><button>View</button><button>Marker</button></div>
                    <div class="transport">
                        <div class="seg"><button aria-label="Auto keying"><svg class="ico" viewBox="0 0 20 20"><circle cx="10" cy="10" r="6" fill="#eee"/></svg></button><button class="faint" aria-label="Keying options"><svg class="chev"><use href="#i-chev"/></svg></button></div>
                        <div class="seg">
                            <button aria-label="First frame"><svg class="ico" viewBox="0 0 20 20"><path d="M4 3v14" stroke="#eee" stroke-width="2"/><path d="M16 3v14l-9-7z" fill="#eee"/></svg></button>
                            <button aria-label="Previous key"><svg class="ico" viewBox="0 0 20 20"><path d="M6 3l5 7-5 7-5-7zM19 4v12l-7-6z" fill="#eee"/></svg></button>
                            <button aria-label="Play back"><svg class="ico" viewBox="0 0 20 20"><path d="M15 1v18L3 10z" fill="#eee"/></svg></button>
                            <button aria-label="Play"><svg class="ico" viewBox="0 0 20 20"><path d="M5 1v18l12-9z" fill="#eee"/></svg></button>
                            <button aria-label="Next key"><svg class="ico" viewBox="0 0 20 20"><path d="M14 3l5 7-5 7-5-7zM1 4v12l7-6z" fill="#eee"/></svg></button>
                            <button aria-label="Last frame"><svg class="ico" viewBox="0 0 20 20"><path d="M16 3v14" stroke="#eee" stroke-width="2"/><path d="M4 3v14l9-7z" fill="#eee"/></svg></button>
                        </div>
                    </div>
                    <div class="frames">
                        <input class="frame" type="text" aria-label="Current frame" value="6">
                        <div class="range">
                            <button aria-label="Preview range"><svg class="ico"><use href="#i-stop"/></svg></button>
                            <label>Start<input type="text" value="1"></label>
                            <label>End<input type="text" value="250"></label>
                        </div>
                    </div>
                </div>
                <div class="ruler" id="ruler"></div>
                <div class="scroll"><i></i><i></i></div>
            </section>
        </div>

        <aside>
            <section class="outliner">
                <div class="header">
                    <button class="type" aria-label="Editor type"><svg class="ico"><use href="#i-tree"/></svg><svg class="chev"><use href="#i-chev"/></svg></button>
                    <button class="type" aria-label="Display mode"><svg class="ico"><use href="#i-layers"/></svg><svg class="chev"><use href="#i-chev"/></svg></button>
                    <label class="search"><svg class="ico"><use href="#i-search"/></svg><input type="text" aria-label="Search outliner"></label>
                    <button class="type" aria-label="Filter"><svg class="ico"><use href="#i-funnel"/></svg><svg class="chev"><use href="#i-chev"/></svg></button>
                </div>
                <ul>
                    <li class="root"><svg class="ico"><use href="#i-box"/></svg>Scene Collection</li>
                    <li class="coll"><svg class="tw"><use href="#i-down"/></svg><span class="chip"><svg class="ico"><use href="#i-box"/></svg></span>Collection
                        <span class="vis"><input type="checkbox" aria-label="Enable collection" checked><svg class="ico"><use href="#i-eye"/></svg><svg class="ico"><use href="#i-cam"/></svg></span></li>
                    <li class="item"><svg class="ico"><use href="#i-edit"/></svg><svg class="tw"><use href="#i-play"/></svg><span class="chip none"><svg class="ico"><use href="#i-tri"/></svg></span>hilt<span class="chip data"><svg class="ico"><use href="#i-mesh"/></svg></span>
                        <span class="vis"><svg class="ico"><use href="#i-eye"/></svg><svg class="ico"><use href="#i-cam"/></svg></span></li>
                    <li class="item hover"><svg class="ico"><use href="#i-edit"/></svg><svg class="tw"><use href="#i-play"/></svg><span class="chip none"><svg class="ico"><use href="#i-tri"/></svg></span>sword_low<span class="chip data"><svg class="ico"><use href="#i-mesh"/></svg></span>
                        <span class="vis"><svg class="ico"><use href="#i-eye"/></svg><svg class="ico"><use href="#i-cam"/></svg></span></li>
                    <li class="item active"><svg class="ico"><use href="#i-edit"/></svg><svg class="tw"><use href="#i-play"/></svg><span class="chip"><svg class="ico"><use href="#i-tri"/></svg></span>wood<span class="chip data"><svg class="ico"><use href="#i-mesh"/></svg></span>
                        <span class="vis"><svg class="ico"><use href="#i-eye"/></svg><svg class="ico"><use href="#i-cam"/></svg></span></li>
                </ul>
            </section>

            <section class="properties">
                <div class="header">
                    <button class="type" aria-label="Editor type"><svg class="ico"><use href="#i-props"/></svg><svg class="chev"><use href="#i-chev"/></svg></button>
                    <label class="search"><svg class="ico"><use href="#i-search"/></svg><input type="text" aria-label="Search properties"></label>
                    <button class="type small" aria-label="Options"><svg class="chev"><use href="#i-chev"/></svg></button>
                </div>
                <div class="body">
                    <nav class="prop-tabs">
                        <button aria-label="Tool"><svg class="ico"><use href="#i-tools"/></svg></button>
                        <button class="sep" aria-label="Render"><svg class="ico"><use href="#i-render"/></svg></button>
                        <button aria-label="Output"><svg class="ico"><use href="#i-output"/></svg></button>
                        <button aria-label="View layer"><svg class="ico"><use href="#i-layers"/></svg></button>
                        <button aria-label="Scene"><svg class="ico"><use href="#i-scene"/></svg></button>
                        <button class="red" aria-label="World"><svg class="ico"><use href="#i-world"/></svg></button>
                        <button class="sep white" aria-label="Collection"><svg class="ico"><use href="#i-boxo"/></svg></button>
                        <button class="sep orange" aria-label="Object"><svg class="ico"><use href="#i-obj"/></svg></button>
                        <button class="blue" aria-label="Modifiers"><svg class="ico"><use href="#i-wrench"/></svg></button>
                        <button class="blue" aria-label="Particles"><svg class="ico"><use href="#i-part"/></svg></button>
                        <button class="blue" aria-label="Physics"><svg class="ico"><use href="#i-phys"/></svg></button>
                        <button class="blue" aria-label="Constraints"><svg class="ico"><use href="#i-cons"/></svg></button>
                        <button class="green" aria-label="Object data"><svg class="ico"><use href="#i-mesh"/></svg></button>
                        <button class="red" aria-label="Material"><svg class="ico"><use href="#i-mat"/></svg></button>
                    </nav>
                    <div class="panels">
                        <div class="crumbs">
                            <svg class="ico"><use href="#i-obj"/></svg><span>wood</span>
                            <svg class="arrow"><use href="#i-right"/></svg>
                            <svg class="ico"><use href="#i-mesh"/></svg><span>LOW</span>
                            <svg class="ico pin"><use href="#i-pin"/></svg>
                        </div>
                        <div class="idblock">
                            <button class="type" aria-label="Browse mesh"><svg class="ico"><use href="#i-mesh"/></svg><svg class="chev"><use href="#i-chev"/></svg></button>
                            <input type="text" aria-label="Mesh name" value="LOW">
                            <button class="sq" aria-label="Fake user"><svg class="ico"><use href="#i-shield"/></svg></button>
                        </div>
                        <div class="panel open">
                            <h3><svg class="chev"><use href="#i-chev"/></svg>Vertex Groups<i class="grip"></i></h3>
                            <div class="listing">
                                <div class="list"><svg class="tw"><use href="#i-play"/></svg><i class="grip"></i></div>
                                <div class="ops"><button>+</button><button class="off">−</button><button class="menu" aria-label="Specials"><svg class="chev"><use href="#i-chev"/></svg></button></div>
                            </div>
                        </div>
                        <div class="panel open">
                            <h3><svg class="chev"><use href="#i-chev"/></svg>Shape Keys<i class="grip"></i></h3>
                            <div class="listing">
                                <div class="list"><svg class="tw"><use href="#i-play"/></svg><i class="grip"></i></div>
                                <div class="ops"><button class="off">+</button><button class="off">−</button><button class="menu" aria-label="Specials"><svg class="chev"><use href="#i-chev"/></svg></button></div>
                            </div>
                        </div>
                        <div class="panel"><h3><svg class="arrow"><use href="#i-right"/></svg>UV Maps<i class="grip"></i></h3></div>
                        <div class="panel"><h3><svg class="arrow"><use href="#i-right"/></svg>Color Attributes<i class="grip"></i></h3></div>
                        <div class="panel"><h3><svg class="arrow"><use href="#i-right"/></svg>Face Maps<i class="grip"></i></h3></div>
                        <div class="panel"><h3><svg class="arrow"><use href="#i-right"/></svg>Attributes<i class="grip"></i></h3></div>
                        <div class="panel"><h3><svg class="arrow"><use href="#i-right"/></svg>Normals<i class="grip"></i></h3></div>
                        <div class="panel"><h3><svg class="arrow"><use href="#i-right"/></svg>Texture Space<i class="grip"></i></h3></div>
                        <div class="panel"><h3><svg class="arrow"><use href="#i-right"/></svg>Remesh<i class="grip"></i></h3></div>
                    </div>
                </div>
            </section>
        </aside>
    </main>

    <script src="script.js"></script>
</body>
</html>
```

FILE: styles.css
```css
* {
    box-sizing: border-box;
}

body {
    margin: 0;
    height: 100vh;
    overflow: hidden;
    display: flex;
    flex-direction: column;
    background-color: #161616;
    color: #e0e0e0;
    font-family: "DejaVu Sans", sans-serif;
    font-size: 13px;
    line-height: 18px;
}

button, input, select {
    font: inherit;
    color: inherit;
    background: none;
    border: 0;
    padding: 0;
    margin: 0;
    min-width: 0;
}

select {
    appearance: none;
}

p, h3, ul, dl, dd {
    margin: 0;
    padding: 0;
    font-weight: normal;
}

ul {
    list-style: none;
}

.sheet {
    display: none;
}

.ico {
    width: 18px;
    height: 18px;
    flex: none;
    display: block;
}

.chev {
    width: 11px;
    height: 11px;
    flex: none;
}

.arrow {
    width: 10px;
    height: 20px;
    flex: none;
    color: #bbb;
}

/* title bar */
.titlebar {
    height: 29px;
    flex: none;
    display: flex;
    align-items: center;
    background: linear-gradient(to right, #3f6a80 20%, #dedede 20%) center top / 302px 1px no-repeat #fff;
    color: #111;
    font-family: "Open Sans", sans-serif;
    font-size: 14px;
}

.logo {
    width: 20px;
    height: 20px;
    margin: 0 5px 0 2px;
    color: #e8862b;
}

.win-buttons {
    margin-left: auto;
    display: flex;
}

.win-buttons button {
    width: 58px;
    height: 29px;
    display: grid;
    place-items: center;
}

.win-buttons button:last-child {
    width: 48px;
}

.win-buttons svg {
    width: 20px;
    height: 20px;
}

/* top bar */
.topbar {
    height: 34px;
    flex: none;
    display: flex;
    align-items: center;
    background-color: #1d1d1d;
    padding-left: 12px;
}

.mark {
    width: 20px;
    height: 20px;
}

.menus {
    display: flex;
    gap: 18px;
    margin: 0 14px;
    white-space: nowrap;
}

.topbar .menus {
    margin: 0 29px 0 12px;
}

.tabs {
    display: flex;
    align-self: flex-end;
    margin-right: auto;
    padding-bottom: 1px;
    color: #999;
    white-space: nowrap;
}

.tabs button {
    height: 26px;
    padding: 0 12px;
}

.tabs .active {
    background-color: #303030;
    border-radius: 5px 5px 0 0;
    color: #fff;
}

.tabs .plus {
    padding: 0 6px;
    font-size: 18px;
}

.idblock {
    display: flex;
    height: 24px;
    width: 239px;
    flex: none;
    border: 1px solid #3a3a3a;
    border-radius: 4px;
    overflow: hidden;
    background-color: #1d1d1d;
}

.topbar .idblock {
    margin-left: 8px;
}

.idblock .type {
    height: 22px;
    border-width: 0 1px 0 0;
    border-radius: 0;
}

.idblock input {
    flex: 1;
    padding: 0 9px;
}

.sq {
    width: 25px;
    display: grid;
    place-items: center;
    background-color: #545454;
}

.sq.off {
    background-color: #2b2b2b;
    color: #666;
}

.sq + .sq {
    border-left: 1px solid #3d3d3d;
}

/* editor headers */
.header {
    height: 31px;
    flex: none;
    display: flex;
    align-items: center;
    position: relative;
    white-space: nowrap;
}

.type {
    height: 24px;
    min-width: 38px;
    flex: none;
    display: flex;
    align-items: center;
    justify-content: center;
    gap: 3px;
    background-color: #232323;
    border: 1px solid #3a3a3a;
    border-radius: 4px;
}

.type.small {
    min-width: 24px;
}

.pick {
    height: 24px;
    flex: none;
    display: flex;
    align-items: center;
    padding: 0 4px;
    background-color: #262626;
    border: 1px solid #3a3a3a;
    border-radius: 4px;
}

.pick select {
    flex: 1;
    padding-left: 9px;
}

.seg {
    display: flex;
    flex: none;
    height: 24px;
    border-radius: 4px;
    overflow: hidden;
    background-color: #545454;
}

.seg button {
    width: 24px;
    display: grid;
    place-items: center;
}

.seg button + button {
    border-left: 1px solid #3d3d3d;
}

.seg .on {
    background-color: #4772b3;
}

.seg.dim {
    background-color: #3d3d3d;
    color: #888;
}

.seg .faint {
    background-color: #2b2b2b;
    color: #555;
}

main {
    flex: 1;
    min-height: 0;
    display: flex;
    gap: 4px;
    padding: 0 0 3px 1px;
}

.workspace {
    flex: 1;
    min-width: 0;
    display: flex;
    flex-direction: column;
    gap: 3px;
}

.editors {
    flex: 1;
    min-height: 0;
    display: flex;
    gap: 6px;
}

/* 3d viewport */
.view3d {
    flex: 534 1 0;
    min-width: 0;
    display: flex;
    flex-direction: column;
    position: relative;
    overflow: hidden;
    border-radius: 5px;
    background-color: #606263;
}

.scene {
    position: absolute;
    inset: 0;
    width: 100%;
    height: 100%;
}

.view3d .header {
    padding-left: 12px;
    background-color: #353535;
}

.view3d .menus {
    gap: 19px;
    margin-left: 17px;
}

.mode {
    width: 136px;
    margin: 0 6px 0 7px;
}

.mode select {
    padding-left: 8px;
}

.view3d .tool-settings {
    height: 32px;
    padding: 0 9px 0 54px;
    background-color: #424242;
}

.fly {
    margin: 0 5px 0 auto;
}

.axes button {
    width: 21px;
}

.tool-settings .dim {
    margin: 0 8px;
}

.options {
    width: 79px;
    gap: 9px;
}

.dots {
    stroke: #0a0a0a;
    stroke-width: 3.5;
    stroke-linecap: round;
    stroke-dasharray: 0 5;
}

.joints {
    stroke: #0a0a0a;
    stroke-width: 4;
    stroke-linecap: round;
}

.teal {
    stroke: #59c9c4;
    stroke-width: 2;
    stroke-dasharray: 2 2;
}

.wire {
    fill: none;
    stroke: #4a1518;
    stroke-width: 1;
    opacity: 0.7;
}

.viewport {
    flex: 1;
    min-height: 0;
    display: flex;
    align-items: flex-start;
    position: relative;
    overflow: hidden;
    padding: 10px 10px 0;
}

.toolbar {
    display: flex;
    flex-direction: column;
    gap: 7px;
    width: 52px;
}

.group {
    display: flex;
    flex-direction: column;
    gap: 1px;
    border-radius: 5px;
    overflow: hidden;
    background-color: #3a3a3a;
}

.group button {
    height: 42px;
    display: grid;
    place-items: center;
    background-color: #262626;
    color: #ccc;
    position: relative;
}

.group .on {
    background-color: #4772b3;
}

.group svg {
    width: 28px;
    height: 28px;
}

.group button > svg {
    margin-right: 4px;
}

.group .more::after {
    content: "";
    position: absolute;
    right: 3px;
    bottom: 3px;
    border: 3px solid;
    border-color: transparent #999 #999 transparent;
}

.overlay {
    margin-left: 21px;
    color: #fff;
    text-shadow: 0 1px 2px #222;
}

.overlay p {
    line-height: 23px;
}

.overlay dl {
    margin-top: 13px;
    display: grid;
    grid-template-columns: 70px auto;
    line-height: 22px;
}

.navigate {
    margin-left: auto;
    display: flex;
    flex-direction: column;
    align-items: flex-end;
    gap: 2px;
}

.gizmo {
    width: 104px;
    height: 104px;
    margin-bottom: -3px;
}

.gizmo text {
    font-weight: bold;
    font-size: 13px;
    text-anchor: middle;
    fill: #16233a;
}

.round {
    width: 35px;
    height: 35px;
    border-radius: 50%;
    background-color: #454646;
    display: grid;
    place-items: center;
}

.round svg {
    width: 22px;
    height: 22px;
}

.sidebar-tab {
    position: absolute;
    right: 0;
    top: 18px;
    width: 10px;
    height: 18px;
    border-radius: 4px 0 0 4px;
    background-color: #474848;
}

.sidebar-tab svg {
    width: 9px;
    height: 18px;
}

/* node editor */
.nodes {
    flex: 1044 1 0;
    min-width: 0;
    position: relative;
    overflow: hidden;
    border-radius: 5px;
    background-color: #1d1d1d;
}

.nodes .header {
    height: 32px;
    padding-left: 6px;
}

.kind {
    width: 112px;
    margin-left: 7px;
}

.nodes .menus {
    gap: 19px;
    margin: 0 17px 0 15px;
}

.check {
    display: flex;
    align-items: center;
    gap: 5px;
    color: #fff;
}

.check input {
    appearance: none;
    width: 17px;
    height: 18px;
    border-radius: 3px;
    background-color: #4772b3;
    display: grid;
    place-items: center;
}

.check input::after {
    content: "";
    width: 5px;
    height: 9px;
    margin-bottom: 3px;
    border: solid #fff;
    border-width: 0 2px 2px 0;
    transform: rotate(40deg);
}

.slot {
    width: 100px;
    margin: 0 6px 0 auto;
}

.slot select {
    padding-left: 6px;
}

.idblock.material {
    width: 295px;
}

.users {
    width: 31px;
    background-color: #2b2b2b;
    color: #999;
}

.users + .sq {
    color: #999;
}

.nodes .pin {
    margin: 0 22px 0 10px;
    color: #999;
}

.snap {
    width: 49px;
    margin-left: 7px;
    align-items: center;
    background-color: #2b2b2b;
}

.snap button {
    height: 24px;
    margin-right: 4px;
    background-color: #545454;
    color: #aaa;
}

.crumbs {
    display: flex;
    align-items: center;
    gap: 12px;
    position: relative;
}

.crumbs .arrow {
    margin: 0 0 0 5px;
}

.nodes .crumbs {
    height: 53px;
}

.nodes .crumbs .arrow:first-child {
    margin: 0 -3px 0 0;
}

.nodes .crumbs .back {
    margin-left: auto;
    transform: scaleX(-1);
}

.canvas {
    position: absolute;
    inset: 0;
    background-image: radial-gradient(circle, #2d2d2d 1px, transparent 3px);
    background-size: 40px 40px;
    background-position: -14px -6px;
}

.links {
    position: absolute;
    inset: 0;
    width: 100%;
    height: 100%;
    fill: none;
    stroke-width: 3;
}

.node {
    position: absolute;
    width: 96px;
    background-color: #303030;
    border-radius: 2px;
    box-shadow: 0 0 3px 1px #0c0c0c;
    font-family: "Liberation Sans", sans-serif;
    font-size: 4px;
    line-height: 6px;
}

.node .title {
    height: 8px;
    padding: 0 11px;
    background-color: #79461f;
    border-radius: 2px 2px 0 0;
    position: relative;
    white-space: nowrap;
    overflow: hidden;
}

.node .title .chev {
    position: absolute;
    left: 4px;
    top: 2px;
    width: 4px;
    height: 4px;
}

.node .out, .node .in {
    height: 9px;
    display: flex;
    align-items: center;
    padding: 0 4px;
    position: relative;
}

.node .out {
    justify-content: flex-end;
}

.node .out::after, .node .in::before {
    content: "";
    position: absolute;
    width: 3px;
    height: 3px;
    border-radius: 50%;
    background-color: #a1a1a1;
}

.node .out::after {
    right: -2px;
}

.node .in::before {
    left: -2px;
}

.node .yellow::after, .node .yellow::before {
    background-color: #c7c729;
}

.node .vector::before, .node .vector::after {
    background-color: #6363c7;
}

.node .in > * {
    flex: 1;
}

.node select {
    height: 7px;
    width: 100%;
    padding: 0 2px;
    background-color: #262626;
    border: 1px solid #3b3b3b;
    border-radius: 1px;
    line-height: 5px;
}

.node .row {
    height: 10px;
    display: flex;
    align-items: center;
    padding: 0 4px;
}

.node .row span {
    width: 32px;
    flex: none;
}

.node .drop {
    position: relative;
    flex: 1;
    display: flex;
}

.node .drop .chev {
    position: absolute;
    right: 1px;
    top: 2px;
    width: 4px;
    height: 4px;
}

.node .gap {
    height: 3px;
}

.node .file {
    height: 7px;
    width: 43px;
    background-color: #191919;
    padding: 0 1px;
}

.node .file-row {
    gap: 1px;
    padding: 0 4px 0 5px;
}

.node .file-row svg {
    width: 7px;
    height: 6px;
    padding: 0 1px;
    background-color: #545454;
}

.node .file-row svg:first-child,
.node .file-row .chev {
    background: none;
    width: 5px;
    padding: 0;
}

.node .field {
    height: 7px;
    display: flex;
    justify-content: space-between;
    padding: 0 5px;
    background-color: #545454;
}

.node .field input {
    width: 14px;
    height: 6px;
    text-align: right;
}

.node .swatch {
    height: 7px;
    flex: 0 0 50px;
    background-color: #e7e7e7;
}

.roughness { left: 214px; top: 345px; }
.basecolor { left: 362px; top: 370px; }
.metalness { left: 207px; top: 513px; }
.emissive { left: 369px; top: 570px; }
.normal { left: 281px; top: 716px; }
.height { left: 683px; top: 553px; }

.principled { left: 564px; top: 355px; }
.principled .title { background-color: #2b652b; }
.principled .gap { height: 4px; }
.principled .sockets {
    height: 221px;
    display: flex;
    flex-direction: column;
}
.principled .in {
    flex: 1;
}

.output { left: 681px; top: 355px; width: 55px; height: 48px; }
.output .title { background-color: #4a1f2d; }

.displacement { left: 821px; top: 443px; width: 57px; height: 68px; outline: 1px solid #fff; }
.displacement .title, .normalmap .title { background-color: #3c3c83; }

.normalmap { left: 465px; top: 689px; width: 59px; height: 60px; }
.normalmap .swatch { background-color: #bdb9f7; flex-basis: 27px; }
.normalmap .uv { height: 7px; width: 100%; background-color: #1d1d1d; border: 1px solid #3b3b3b; }

/* timeline */
.timeline {
    flex: none;
    background-color: #1d1d1d;
    border-radius: 5px;
    overflow: hidden;
}

.timeline .header {
    padding: 0 10px 0 9px;
    background-color: #303030;
}

.pair {
    display: flex;
    margin-left: 8px;
    height: 24px;
    border: 1px solid #3a3a3a;
    border-radius: 4px;
    background-color: #262626;
}

.pair button {
    display: flex;
    align-items: center;
    gap: 7px;
    padding: 0 4px 0 8px;
}

.pair button + button {
    border-left: 1px solid #3a3a3a;
}

.timeline .menus {
    margin: 0 14px 0 12px;
    gap: 19px;
}

.transport {
    flex: 1;
    display: flex;
    justify-content: center;
    gap: 7px;
}

.transport .seg + .seg button {
    width: 25px;
}

.frames {
    display: flex;
    gap: 7px;
    margin-left: 20px;
}

.frame {
    width: 92px;
    height: 24px;
    border-radius: 4px;
    background-color: #545454;
    text-align: center;
}

.range {
    display: flex;
    height: 24px;
    border-radius: 4px;
    background-color: #545454;
}

.range button {
    width: 25px;
    display: grid;
    place-items: center;
}

.range label {
    width: 112px;
    display: flex;
    align-items: center;
    justify-content: space-between;
    padding: 0 17px 0 19px;
    border-left: 1px solid #3d3d3d;
}

.range label + label {
    width: 105px;
}

.range input {
    width: 30px;
    text-align: right;
}

.ruler {
    height: 26px;
    padding: 0 29px 0 23px;
    display: flex;
    align-items: center;
    position: relative;
    color: #aaa;
}

.ruler span {
    flex: 1;
    text-align: center;
    padding-top: 3px;
}

.ruler .now {
    position: absolute;
    left: 73px;
    bottom: 0;
    width: 30px;
    height: 23px;
    padding-top: 3px;
    border-radius: 4px;
    background-color: #4772b3;
    color: #fff;
}

.scroll {
    height: 12px;
    margin: 0 10px 1px 9px;
    display: flex;
    align-items: center;
    justify-content: space-between;
    padding: 0 2px;
    border-radius: 6px;
    background-color: #545454;
}

.scroll i {
    width: 8px;
    height: 8px;
    border-radius: 50%;
    background-color: #2b2b2b;
}

/* right column */
aside {
    width: 322px;
    flex: none;
    display: flex;
    flex-direction: column;
    gap: 3px;
}

.outliner {
    flex: 301 1 0;
    min-height: 0;
    background-color: #282828;
    border-radius: 5px 0 0 5px;
    overflow: hidden;
}

.outliner .header {
    height: 33px;
    padding: 0 5px 0 10px;
    gap: 8px;
}

.search {
    height: 24px;
    width: 144px;
    display: flex;
    align-items: center;
    padding-left: 6px;
    background-color: #1d1d1d;
    border: 1px solid #3a3a3a;
    border-radius: 4px;
}

.search input {
    flex: 1;
    width: 50px;
}

.outliner .search {
    margin: 0 auto 0 12px;
}

.outliner li {
    height: 25px;
    display: flex;
    align-items: center;
    color: #c4c4c4;
}

.outliner .coll {
    padding-left: 31px;
    background-color: #2b2b2b;
}

.outliner .root {
    padding-left: 28px;
    gap: 8px;
}

.tw {
    width: 10px;
    height: 10px;
    flex: none;
    color: #ccc;
}

.coll .tw {
    margin-right: 8px;
}

.coll .chip {
    margin-right: 5px;
}

.chip {
    width: 25px;
    height: 23px;
    display: grid;
    place-items: center;
    border-radius: 5px;
    background-color: #4c4c4c;
}

.chip.none {
    background: none;
}

.outliner .item {
    padding-left: 3px;
    background-color: #1e2f4a;
    color: #c46a34;
}

.outliner .item.hover {
    background-color: #334d80;
}

.outliner .item.active {
    color: #f0b354;
}

.item > .ico {
    color: #8fa5cc;
}

.item .tw {
    margin: 0 9px 0 36px;
}

.item .chip {
    margin-right: 4px;
    color: #c98d62;
}

.active .chip {
    background-color: #5a6170;
}

.outliner .item .data {
    margin-left: 23px;
    background-color: #195254;
    border: 1px solid #2c6f6c;
    color: #26c49c;
}

.vis {
    margin-left: auto;
    padding-right: 5px;
    display: flex;
    align-items: center;
    gap: 7px;
    color: #e0e0e0;
}

.vis input {
    appearance: none;
    width: 13px;
    height: 13px;
    margin-right: 2px;
    border-radius: 2px;
    background-color: #e6e6e6;
    display: grid;
    place-items: center;
}

.vis input::after {
    content: "";
    width: 4px;
    height: 8px;
    margin-bottom: 2px;
    border: solid #222;
    border-width: 0 2px 2px 0;
    transform: rotate(40deg);
}

.properties {
    flex: 636 1 0;
    min-height: 0;
    display: flex;
    flex-direction: column;
    background-color: #303030;
    border-radius: 5px 0 0 5px;
    overflow: hidden;
}

.properties .header {
    padding: 0 3px 0 10px;
}

.properties .search {
    margin: 0 auto 0 40px;
}

.body {
    flex: 1;
    min-height: 0;
    display: flex;
}

.prop-tabs {
    width: 34px;
    flex: none;
    padding-top: 9px;
    background-color: #1d1d1d;
    color: #b5b5b5;
}

.prop-tabs button {
    width: 33px;
    height: 35px;
    margin-left: 1px;
    display: grid;
    place-items: center;
}

.prop-tabs .sep {
    margin-top: 9px;
}

.prop-tabs .red { color: #b9575f; }
.prop-tabs .white { color: #ddd; }
.prop-tabs .orange { color: #cf8748; }
.prop-tabs .blue { color: #6484cc; }
.prop-tabs .green {
    color: #2fc79c;
    background-color: #303030;
    border-radius: 5px 0 0 5px;
}

.panels {
    flex: 1;
    min-width: 0;
    padding: 0 1px 0 10px;
}

.panels .crumbs {
    height: 44px;
    padding: 0 5px 0 4px;
}

.panels .crumbs span {
    margin-left: -2px;
}

.panels .pin {
    margin-left: auto;
    color: #888;
}

.panels .idblock {
    width: 100%;
    margin: 11px 0 13px;
}

.panels .sq {
    color: #999;
}

.panel {
    margin-bottom: 2px;
    border-radius: 4px;
    background-color: #3d3d3d;
}

.panel h3 {
    height: 31px;
    display: flex;
    align-items: center;
    padding: 0 8px 0 11px;
    font-size: 13px;
}

.panel h3 .arrow {
    margin-right: 6px;
}

.panel h3 .chev {
    width: 12px;
    height: 12px;
    margin-right: 4px;
    color: #bbb;
}

.grip {
    width: 16px;
    height: 8px;
    margin-left: auto;
    background-image: radial-gradient(circle, #bbb 1px, transparent 1px);
    background-size: 4px 4px;
}

.panel.open {
    height: 150px;
}

.listing {
    display: flex;
    gap: 12px;
    padding: 11px 11px 0;
}

.list {
    flex: 1;
    height: 96px;
    display: flex;
    align-items: flex-end;
    padding: 0 13px 7px;
    border-radius: 4px;
    background-color: #2b2b2b;
}

.list .grip {
    margin: 0 auto;
}

.ops {
    width: 23px;
    display: flex;
    flex-direction: column;
    gap: 1px;
}

.ops button {
    height: 24px;
    background-color: #545454;
    border-radius: 4px;
    font-size: 16px;
    display: grid;
    place-items: center;
}

.ops .off {
    background-color: #484848;
    color: #888;
}

.ops .menu {
    margin-top: 7px;
    background-color: #232323;
}
```

FILE: script.js
```js
const chev = '<svg class="chev"><use href="#i-chev"/></svg>';

function drop(label) {
    return `<div class="drop"><select aria-label="${label}"><option>${label}</option></select>${chev}</div>`;
}

function title(text) {
    return `<div class="title">${chev}${text}</div>`;
}

// the six image texture nodes only differ in their map name
function imageNode(map) {
    const file = `1_low_${map}.Material.png`;
    return `<div class="node ${map.toLowerCase()}">
        ${title(file)}
        <div class="out yellow">Color</div>
        <div class="out">Alpha</div>
        <div class="gap"></div>
        <div class="row file-row">
            <svg><use href="#i-layers"/></svg>${chev}
            <input class="file" aria-label="Image" value="${file.slice(0, 19)}...">
            <svg><use href="#i-shield"/></svg><svg><use href="#i-copy"/></svg><svg><use href="#i-folder"/></svg><svg><use href="#i-x"/></svg>
        </div>
        <div class="row">${drop('Linear')}</div>
        <div class="row">${drop('Flat')}</div>
        <div class="row">${drop('Repeat')}</div>
        <div class="row">${drop('Single Image')}</div>
        <div class="row"><span>Color Space</span>${drop('sRGB')}</div>
        <div class="row"><span>Alpha</span>${drop('Straight')}</div>
        <div class="in vector"><span>Vector</span></div>
    </div>`;
}

// value slider, fill is the blue part in percent
function slider(name, value, fill) {
    return `<div class="in"><label class="field" style="background-image: linear-gradient(to right, #4772b3 ${fill}%, transparent ${fill}%)">${name}<input value="${value}"></label></div>`;
}

function socket(name, type = '') {
    return `<div class="in ${type}"><span>${name}</span></div>`;
}

const principled = `<div class="node principled">
    ${title('Principled BSDF')}
    <div class="out">BSDF</div>
    <div class="gap"></div>
    <div class="row">${drop('GGX')}</div>
    <div class="row">${drop('Random Walk')}</div>
    <div class="sockets">
        ${socket('Base Color', 'yellow')}
        ${slider('Subsurface', '0.000', 0)}
        <div class="in vector">${drop('Subsurface Radius')}</div>
        <div class="in yellow"><span>Subsurface Color</span><i class="swatch"></i></div>
        ${slider('Subsurface IOR', '1.400', 12)}
        ${slider('Subsurface Anisotropy', '0.000', 0)}
        ${socket('Metallic')}
        ${slider('Specular', '1.000', 100)}
        ${slider('Specular Tint', '0.000', 0)}
        ${socket('Roughness')}
        ${slider('Anisotropic', '0.000', 0)}
        ${slider('Anisotropic Rotation', '0.000', 0)}
        ${slider('Sheen', '0.000', 0)}
        ${slider('Sheen Tint', '0.500', 50)}
        ${slider('Clearcoat', '0.000', 0)}
        ${slider('Clearcoat Roughness', '0.030', 1)}
        ${slider('IOR', '1.450', 0)}
        ${slider('Transmission', '0.000', 0)}
        ${slider('Transmission Roughness', '0.000', 0)}
        ${socket('Emission', 'yellow')}
        ${slider('Emission Strength', '1.000', 0)}
        ${slider('Alpha', '1.000', 100)}
        ${socket('Normal', 'vector')}
        ${socket('Clearcoat Normal', 'vector')}
        ${socket('Tangent', 'vector')}
    </div>
</div>`;

const output = `<div class="node output">
    ${title('Material Output')}
    <div class="row">${drop('All')}</div>
    ${socket('Surface')}
    ${socket('Volume')}
    ${socket('Displacement', 'vector')}
</div>`;

const displacement = `<div class="node displacement">
    ${title('Displacement')}
    <div class="out vector">Displacement</div>
    <div class="gap"></div>
    <div class="row">${drop('Object Space')}</div>
    ${socket('Height')}
    ${slider('Midlevel', '0.500', 0)}
    ${slider('Scale', '1.000', 0)}
    ${socket('Normal', 'vector')}
</div>`;

const normalMap = `<div class="node normalmap">
    ${title('Normal Map')}
    <div class="out vector">Normal</div>
    <div class="gap"></div>
    <div class="row">${drop('Tangent Space')}</div>
    <div class="row"><input class="uv" aria-label="UV map" value="•"></div>
    ${socket('Strength')}
    <div class="in yellow"><span>Color</span><i class="swatch"></i></div>
</div>`;

const maps = ['Roughness', 'BaseColor', 'Metalness', 'Emissive', 'Normal', 'Height'];
document.querySelector('#node-list').innerHTML =
    maps.map(imageNode).join('') + principled + output + displacement + normalMap;

// timeline numbers
const ruler = document.querySelector('#ruler');
for (let frame = 0; frame <= 250; frame += 10) {
    const tick = document.createElement('span');
    tick.textContent = frame;
    ruler.append(tick);
}
const now = document.createElement('span');
now.className = 'now';
now.textContent = 6;
ruler.append(now);
```
